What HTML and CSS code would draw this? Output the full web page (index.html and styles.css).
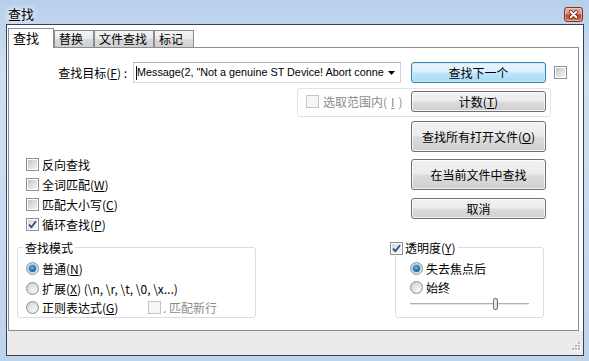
FILE: index.html
```html
<!DOCTYPE html>
<html lang="zh-CN">
<head>
<meta charset="utf-8">
<title>查找</title>
<link rel="stylesheet" href="styles.css">
</head>
<body>
<div class="window">
  <div class="titlebar">
    <span class="title">查找</span>
    <span class="close">
      <svg width="18" height="13" viewBox="0 0 18 13"><path d="M6 3.5 L12 9.5 M12 3.5 L6 9.5" stroke="#5a1d14" stroke-width="3.8" stroke-linecap="round"/><path d="M6 3.5 L12 9.5 M12 3.5 L6 9.5" stroke="#fff" stroke-width="2.2" stroke-linecap="round"/></svg>
    </span>
  </div>
  <div class="client">
    <div class="tabs">
      <div class="tab active w46">查找</div>
      <div class="tab w40">替换</div>
      <div class="tab w60">文件查找</div>
      <div class="tab w40">标记</div>
    </div>
    <div class="page">
      <div class="row1">
        <span class="findlabel">查找目标(<u>F</u>) :</span>
        <div class="combo">
          <span class="caret"></span>
          <span class="combo-text">Message(2, "Not a genuine ST Device! Abort conne</span>
          <svg class="arrow" width="7" height="4" viewBox="0 0 7 4"><path d="M0 0 H7 L3.5 4 Z" fill="#000"/></svg>
        </div>
        <button class="btn default next">查找下一个</button>
        <span class="cb side"></span>
      </div>
      <div class="row2">
        <div class="selgroup">
          <span class="selcheck"><span class="cb dis"></span>选取范围内(<u>I</u>)</span>
          <button class="btn count">计数(<u>T</u>)</button>
        </div>
      </div>
      <div class="middle">
        <div class="opts">
          <div class="opt"><span class="cb"></span>反向查找</div>
          <div class="opt"><span class="cb"></span>全词匹配(<u>W</u>)</div>
          <div class="opt"><span class="cb"></span>匹配大小写(<u>C</u>)</div>
          <div class="opt"><span class="cb checked"><svg width="9" height="9" viewBox="0 0 9 9"><path d="M1 4.6 L3.4 7.2 L8 1.2" fill="none" stroke="#2b4c80" stroke-width="1.8"/></svg></span>循环查找(<u>P</u>)</div>
        </div>
        <div class="actions">
          <button class="btn tall">查找所有打开文件(<u>O</u>)</button>
          <button class="btn tall b2">在当前文件中查找</button>
          <button class="btn b3">取消</button>
        </div>
      </div>
      <div class="bottom">
        <div class="group gmode">
          <div class="ghead">查找模式</div>
          <div class="grows">
            <div class="rrow"><span class="rd on"></span>普通(<u>N</u>)</div>
            <div class="rrow"><span class="rd"></span>扩展(<u>X</u>) (\n, \r, \t, \0, \x...)</div>
            <div class="rrow last"><span class="rx"><span class="rd"></span>正则表达式(<u>G</u>)</span><span class="cb dis"></span><span class="distext">. 匹配新行</span></div>
          </div>
        </div>
        <div class="group gtrans">
          <div class="ghead thead"><span class="cb checked"><svg width="9" height="9" viewBox="0 0 9 9"><path d="M1 4.6 L3.4 7.2 L8 1.2" fill="none" stroke="#2b4c80" stroke-width="1.8"/></svg></span>透明度(<u>Y</u>)</div>
          <div class="trows">
            <div class="rrow r19"><span class="rd on"></span>失去焦点后</div>
            <div class="rrow r19"><span class="rd"></span>始终</div>
            <div class="slider"><span class="thumb"></span></div>
          </div>
        </div>
      </div>
    </div>
    <div class="status">
      <svg class="grip" width="11" height="11" viewBox="0 0 11 11">
        <g fill="#fff"><rect x="9" y="1" width="2" height="2"/><rect x="6" y="4" width="2" height="2"/><rect x="9" y="4" width="2" height="2"/><rect x="3" y="7" width="2" height="2"/><rect x="6" y="7" width="2" height="2"/><rect x="9" y="7" width="2" height="2"/></g>
        <g fill="#b8b5b2"><rect x="8" y="0" width="2" height="2"/><rect x="5" y="3" width="2" height="2"/><rect x="8" y="3" width="2" height="2"/><rect x="2" y="6" width="2" height="2"/><rect x="5" y="6" width="2" height="2"/><rect x="8" y="6" width="2" height="2"/></g>
      </svg>
    </div>
  </div>
</div>
</body>
</html>
```

FILE: styles.css
```css
* { box-sizing: border-box; }
html, body { margin: 0; padding: 0; }
body {
  width: 589px; height: 361px; overflow: hidden;
  font-family: "Noto Sans CJK SC", "Noto Sans", sans-serif;
  font-size: 12px; color: #000;
}
u { text-decoration: underline; text-underline-offset: 1px; }

.window {
  width: 589px; height: 361px;
  display: flex; flex-direction: column;
  background: linear-gradient(180deg, #b6cfea 0%, #cfe0f3 20%, #c8dcf1 60%, #bdd3ec 100%);
}
.titlebar {
  height: 24px; flex: none;
  display: flex; justify-content: space-between; align-items: flex-start;
}
.title {
  margin: 5px 0 0 8px; font-size: 13px; line-height: 18px;
  text-shadow: 0 0 6px #fff, 0 0 10px #fff;
}
.close {
  width: 19px; height: 15px; margin: 7px 6px 0 0;
  border: 1px solid #7a3428; border-radius: 3px;
  background: linear-gradient(180deg, #eab0a2 0%, #dc8f7e 45%, #c2432c 52%, #cf5a3f 80%, #e4906d 100%);
  box-shadow: inset 0 0 0 1px rgba(255,220,210,.45);
  display: flex; align-items: center; justify-content: center;
}

.client {
  flex: 1; margin: 0 5px 5px 6px;
  border: 1px solid #33445a; background: #fff;
  display: flex; flex-direction: column;
}
.tabs { height: 22px; flex: none; display: flex; align-items: flex-end; padding-left: 1px; }
.tab {
  height: 17px; border: 1px solid #898c95; border-bottom: none;
  background: linear-gradient(180deg, #f4f4f4 0%, #e9e9e9 50%, #dadada 52%, #d0d0d0 100%);
  line-height: 15px; padding-left: 4px; white-space: nowrap; font-size: 12px;
}
.tab.active {
  height: 20px; margin-bottom: -1px; position: relative; z-index: 1;
  background: #fff; font-size: 13px; line-height: 18px;
}
.w46 { width: 46px; }
.w40 { width: 40px; }
.w60 { width: 60px; }

.page {
  flex: none; margin-left: 1px; width: 571px; height: 284px;
  border: 1px solid #898c95; background: #fff;
  display: flex; flex-direction: column;
}
.status {
  flex: 1; background: #edebe9;
  display: flex; justify-content: flex-end; align-items: flex-end;
  padding: 0 2px 2px 0;
}

/* controls */
.btn {
  font-family: inherit; font-size: 12px; color: #000;
  width: 135px; height: 21px; padding: 0; margin: 0;
  border: 1px solid #707070; border-radius: 3px;
  background: linear-gradient(180deg, #f2f2f2 0%, #ebebeb 49%, #dddddd 51%, #cfcfcf 100%);
  box-shadow: inset 0 0 0 1px rgba(255,255,255,.75);
  line-height: 19px; text-align: center;
}
.btn.default {
  border-color: #3c7fb1;
  background: linear-gradient(180deg, #eaf6fd 0%, #d9f0fc 49%, #bee6fd 51%, #a7d9f5 100%);
  box-shadow: inset 0 0 0 1px rgba(200,236,255,.9);
}
.cb {
  width: 13px; height: 13px; flex: none;
  border: 1px solid #8e8f8f; padding: 1px;
  background: linear-gradient(135deg, #c3c7cc, #f2f3f4) content-box, #fff;
  display: flex; align-items: center; justify-content: center;
}
.cb.checked { background: linear-gradient(135deg, #d3d6da, #f7f7f8) content-box, #fff; }
.cb.dis { border-color: #c5c5c5; background: #f6f6f6; }
.rd {
  width: 13px; height: 13px; flex: none; border-radius: 50%;
  border: 1px solid #8e8f8f;
  background: radial-gradient(circle at 65% 70%, #f7f7f7 0, #d6d9dd 70%, #c2c6cb 100%);
  display: flex; align-items: center; justify-content: center;
}
.rd.on::after {
  content: ""; width: 7px; height: 7px; border-radius: 50%;
  background: radial-gradient(circle at 45% 40%, #6fc3f0 0, #2a78b6 45%, #0e3a66 100%);
  box-shadow: 0 0 0 1px rgba(120,190,235,.6);
}

/* row 1 */
.row1 { display: flex; align-items: center; margin-top: 14px; height: 21px; flex: none; }
.findlabel { width: 122px; text-align: right; padding-right: 4px; line-height: 21px; white-space: nowrap; }
.combo {
  width: 268px; height: 21px; margin-left: 2px;
  border: 1px solid #abadb3; border-color: #a9adb5 #cfd3da #d8dde4 #cfd3da;
  display: flex; align-items: center;
}
.caret { width: 1px; height: 14px; background: #111; margin-left: 2px; flex: none; }
.combo-text {
  width: 249px; overflow: hidden; white-space: nowrap; flex: none;
  font-family: "Liberation Sans", Arial, sans-serif; font-size: 10.8px; line-height: 19px;
}
.arrow { margin-left: 2px; flex: none; }
.next { margin-left: 10px; }
.cb.side { margin-left: 8px; }

/* row 2 */
.row2 { margin-top: 5px; padding-left: 288px; flex: none; }
.selgroup {
  width: 254px; height: 29px;
  border: 1px solid #dde3e8; border-radius: 3px;
  display: flex; align-items: flex-start; padding: 0 4px 0 8px;
}
.selcheck { display: flex; align-items: center; height: 21px; margin-top: 2px; color: #8c8c8c; gap: 4px; white-space: nowrap; }
.count { margin-left: auto; margin-top: 2px; }

/* middle */
.middle { display: flex; margin-top: 4px; flex: none; }
.opts { flex: 1; padding-left: 17px; padding-top: 33px; }
.opt { display: flex; align-items: center; height: 20px; white-space: nowrap; }
.opt .cb { margin-right: 3px; }
.actions { width: 135px; margin-right: 32px; display: flex; flex-direction: column; }
.tall { height: 31px; line-height: 29px; }
.b2 { margin-top: 7px; }
.b3 { margin-top: 8px; }

/* bottom groups */
.bottom { display: flex; margin-top: 13px; padding-left: 8px; flex: none; }
.group { height: 71px; border: 1px solid #d5dfe5; border-radius: 3px; }
.gmode { width: 239px; }
.gtrans { width: 149px; margin-left: 139px; }
.ghead {
  display: flex; align-items: center; width: max-content;
  height: 16px; line-height: 16px; margin-top: -8px; margin-left: 5px;
  padding: 0 2px; background: #fff; white-space: nowrap;
}
.thead { margin-left: -6px; padding: 0 2px 0 0; }
.thead .cb { margin-right: 2px; }
.grows { margin-top: 2px; padding-left: 8px; }
.rrow { display: flex; align-items: center; height: 20px; white-space: nowrap; }
.rrow.last { height: 19px; }
.rrow .rd { margin-right: 3px; }
.rx { width: 122px; display: flex; align-items: center; }
.distext { color: #8c8c8c; margin-left: 2px; }
.trows { margin-top: 3px; padding-left: 14px; }
.r19 { height: 19px; }
.slider {
  width: 119px; height: 12px; margin-top: 1px;
  background: linear-gradient(180deg, transparent 0 5px, #b0b0b0 5px 6px, #e7e7e7 6px 7px, transparent 7px);
  display: flex; align-items: center;
}
.thumb {
  width: 5px; height: 12px; margin-left: 83px;
  border: 1px solid #707070; border-radius: 2px;
  background: linear-gradient(90deg, #f4f4f4, #d6d6d6);
}
.grip { display: block; }
```
